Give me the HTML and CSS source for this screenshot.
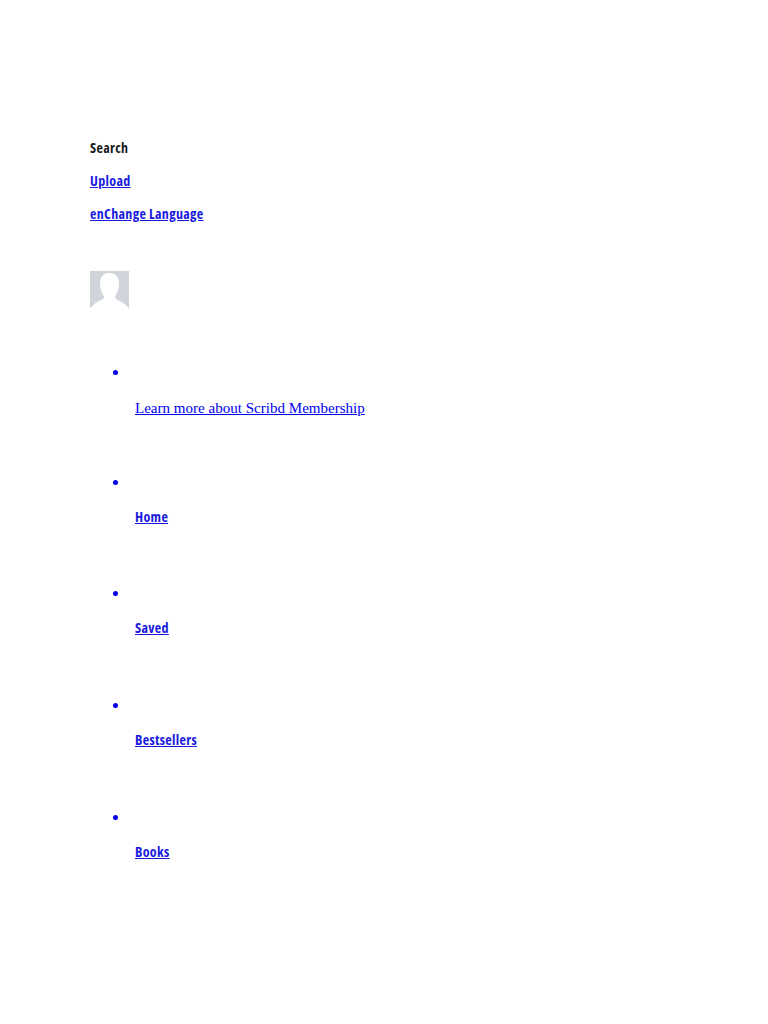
FILE: index.html
```html
<!DOCTYPE html>
<html lang="en">
<head>
<meta charset="utf-8">
<title>Scribd</title>
<link rel="stylesheet" href="styles.css">
</head>
<body>
<header class="top">
  <div class="row search-label">Search</div>
  <div class="row"><a href="#">Upload</a></div>
  <div class="row"><a href="#">enChange Language</a></div>
  <svg class="avatar" viewBox="0 0 39 40" aria-hidden="true">
    <rect width="39" height="40" fill="#d1d5db"/>
    <path d="M19.500 2C13 2 10 6.500 10 12.500c0 5 1.500 9 3.500 12 .7 1 .7 2.500-.5 3.500-2 1.500-5.500 2.500-8 4.500C3 34 1.500 36 0 37.500V40h39v-2.500c-1.500-1.500-3-3.500-5-5-2.500-2-6-3-8-4.500-1.200-1-1.200-2.500-.5-3.500 2-3 3.500-7 3.500-12C29 6.500 26 2 19.500 2z" fill="#fff"/>
  </svg>
</header>
<ul class="menu">
  <li class="item item-first"><div class="blank blank-first">&nbsp;</div><a class="link serif" href="#">Learn more about Scribd Membership</a></li>
  <li class="item"><div class="blank">&nbsp;</div><a class="link" href="#">Home</a></li>
  <li class="item"><div class="blank">&nbsp;</div><a class="link" href="#">Saved</a></li>
  <li class="item"><div class="blank">&nbsp;</div><a class="link" href="#">Bestsellers</a></li>
  <li class="item"><div class="blank">&nbsp;</div><a class="link" href="#">Books</a></li>
</ul>
</body>
</html>
```
FILE: styles.css
```css
html, body { margin: 0; background: #fff; }
body { font-family: "Open Sans", "Noto Sans", sans-serif; font-size: 14px; font-weight: 700; font-stretch: 75%; letter-spacing: 0.33px; color: #1a1a1a; }
a { color: #1a1add; text-decoration: underline; }
.top { padding: 139px 0 0 90px; }
.row { height: 33px; line-height: 18px; }
.avatar { display: block; width: 39px; height: 40px; margin-top: 33px; }
.menu { list-style: disc; margin: 53px 0 0 90px; padding: 0 0 0 40px; color: #0000ee; }
.item { height: 111.7px; line-height: 18px; font-size: 14px; }
.item-first { height: 109.7px; }
.blank { font-family: "Liberation Serif", serif; font-size: 16px; font-weight: 400; height: 34px; }
.blank-first { height: 35px; }
.link { display: inline-block; margin-left: 5px; font-size: 14px; }
.serif { font-family: "Liberation Serif", serif; font-size: 15.05px; font-weight: 400; letter-spacing: 0; color: #0000ee; }
```
